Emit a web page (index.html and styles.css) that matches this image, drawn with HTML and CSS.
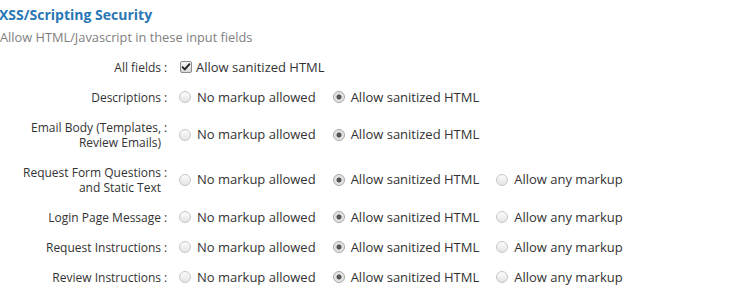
FILE: index.html
```html
<!DOCTYPE html>
<html lang="en">
<head>
    <meta charset="UTF-8">
    <meta name="viewport" content="width=device-width, initial-scale=1.0">
    <title>XSS/Scripting Security</title>
    <link rel="stylesheet" href="styles.css">
</head>
<body>
    <div class="section">
        <h2 class="section-title">XSS/Scripting Security</h2>
        <p class="section-desc">Allow HTML/Javascript in these input fields</p>

        <div class="settings">
            <!-- All fields -->
            <div class="row">
                <div class="label">All fields</div>
                <div class="colon">:</div>
                <div class="options">
                    <label class="option">
                        <span class="checkbox">
                            <svg width="12" height="12" viewBox="0 0 12 12">
                                <defs>
                                    <linearGradient id="cbg" x1="0" y1="0" x2="0" y2="1">
                                        <stop offset="0" stop-color="#f6f6f6"/>
                                        <stop offset="1" stop-color="#d6d6d6"/>
                                    </linearGradient>
                                </defs>
                                <rect x="0.5" y="0.5" width="11" height="11" rx="1.5" fill="url(#cbg)" stroke="#8c8c8c"/>
                                <path d="M2.6 6.2 L4.8 8.4 L9.4 3.2" fill="none" stroke="#222" stroke-width="1.9" stroke-linecap="round" stroke-linejoin="round"/>
                            </svg>
                        </span>
                        Allow sanitized HTML
                    </label>
                </div>
            </div>

            <div class="row">
                <div class="label">Descriptions</div>
                <div class="colon">:</div>
                <div class="options">
                    <label class="option"><span class="radio"></span>No markup allowed</label>
                    <label class="option"><span class="radio checked"></span>Allow sanitized HTML</label>
                </div>
            </div>

            <div class="row">
                <div class="label">Email Body (Templates, Review Emails)</div>
                <div class="colon">:</div>
                <div class="options">
                    <label class="option"><span class="radio"></span>No markup allowed</label>
                    <label class="option"><span class="radio checked"></span>Allow sanitized HTML</label>
                </div>
            </div>

            <div class="row">
                <div class="label">Request Form Questions and Static Text</div>
                <div class="colon">:</div>
                <div class="options">
                    <label class="option"><span class="radio"></span>No markup allowed</label>
                    <label class="option"><span class="radio checked"></span>Allow sanitized HTML</label>
                    <label class="option"><span class="radio"></span>Allow any markup</label>
                </div>
            </div>

            <div class="row">
                <div class="label">Login Page Message</div>
                <div class="colon">:</div>
                <div class="options">
                    <label class="option"><span class="radio"></span>No markup allowed</label>
                    <label class="option"><span class="radio checked"></span>Allow sanitized HTML</label>
                    <label class="option"><span class="radio"></span>Allow any markup</label>
                </div>
            </div>

            <div class="row">
                <div class="label">Request Instructions</div>
                <div class="colon">:</div>
                <div class="options">
                    <label class="option"><span class="radio"></span>No markup allowed</label>
                    <label class="option"><span class="radio checked"></span>Allow sanitized HTML</label>
                    <label class="option"><span class="radio"></span>Allow any markup</label>
                </div>
            </div>

            <div class="row">
                <div class="label">Review Instructions</div>
                <div class="colon">:</div>
                <div class="options">
                    <label class="option"><span class="radio"></span>No markup allowed</label>
                    <label class="option"><span class="radio checked"></span>Allow sanitized HTML</label>
                    <label class="option"><span class="radio"></span>Allow any markup</label>
                </div>
            </div>
        </div>
    </div>
</body>
</html>
```

FILE: styles.css
```css
body {
    font-family: "Open Sans", Arial, sans-serif;
    background-color: #fff;
    color: #333;
    margin: 0;
    padding: 0;
}
.section {
    padding-top: 5px;
}
.section-title {
    margin: 0 0 0 -1px;
    font-size: 14px;
    line-height: 20px;
    font-weight: bold;
    color: #2a77b5;
}
.section-desc {
    margin: 3px 0 0;
    font-size: 12.8px;
    line-height: 18px;
    color: #808080;
}
.settings {
    margin-top: 6px;
}
.row {
    display: flex;
    align-items: center;
    padding: 7.5px 0;
    font-size: 13px;
    line-height: 15px;
}
.label {
    width: 161px;
    font-size: 12px;
    text-align: right;
    align-self: flex-start;
}
.colon {
    width: 18px;
    padding-left: 3px;
    box-sizing: border-box;
    font-size: 12px;
    align-self: flex-start;
}
.options {
    display: flex;
    align-items: center;
}
.option {
    display: flex;
    align-items: center;
    margin-right: 17px;
    white-space: nowrap;
}
.checkbox {
    display: inline-flex;
    width: 12px;
    height: 12px;
    margin: 0 4px 0 1px;
}
.radio {
    display: inline-block;
    width: 12px;
    height: 12px;
    margin-right: 6px;
    box-sizing: border-box;
    border-radius: 50%;
    border: 1px solid #c6c6c6;
    background: linear-gradient(#fcfcfc, #e4e4e4);
}
.radio.checked {
    border-color: #a6a6a6;
    background: radial-gradient(circle, #555 0, #555 2.2px, #dcdcdc 2.8px, #f4f4f4 100%);
}
```
